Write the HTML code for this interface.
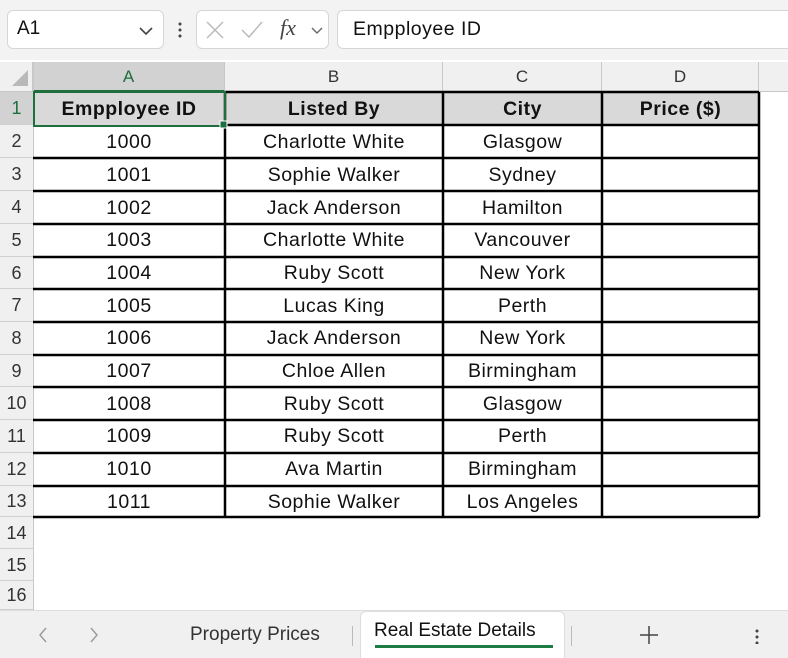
<!DOCTYPE html>
<html><head><meta charset="utf-8"><style>
*{margin:0;padding:0;box-sizing:border-box}
body{width:788px;height:658px;overflow:hidden;background:#fff;font-family:"Liberation Sans",sans-serif;position:relative;color:#111}
.abs{position:absolute}
.box{position:absolute;background:#fff;border:1px solid #d6d6d6;border-radius:6px}
.cell{position:absolute;text-align:center;font-size:19.5px;line-height:32px;letter-spacing:0.5px;white-space:nowrap}
.rh{position:absolute;left:0;width:33px;text-align:center;font-size:18px;color:#333;border-bottom:1px solid #d0d0d0;background:#f0f0f0}
.ch{position:absolute;top:62px;height:30px;text-align:center;font-size:17px;line-height:30px;color:#333;border-right:1px solid #c8c8c8;background:#f0f0f0}
</style></head><body>
<div class="abs" style="left:0;top:0;width:788px;height:60px;background:#f3f3f3"></div>
<div class="box" style="left:7px;top:10px;width:157px;height:39px"></div>
<div class="abs" style="left:17px;top:18px;font-size:19px">A1</div>
<svg class="abs" style="left:138px;top:26px" width="16" height="10"><path d="M2 2l6 6 6-6" stroke="#444" stroke-width="1.6" fill="none"/></svg>
<div class="abs" style="left:178px;top:21px;width:4px;height:18px;background:radial-gradient(circle,#444 1.4px,transparent 1.6px) 0 0/4px 6px"></div>
<div class="box" style="left:196px;top:10px;width:133px;height:39px"></div>
<svg class="abs" style="left:205px;top:20px" width="20" height="20"><path d="M2 2l16 16M18 2L2 18" stroke="#bbb" stroke-width="1.5"/></svg>
<svg class="abs" style="left:240px;top:20px" width="24" height="20"><path d="M2 10l7 7 13-15" stroke="#bbb" stroke-width="1.5" fill="none"/></svg>
<div class="abs" style="left:280px;top:15px;font-family:'Liberation Serif',serif;font-style:italic;font-size:22px;color:#444">fx</div>
<svg class="abs" style="left:310px;top:26px" width="14" height="10"><path d="M2 2l5 5 5-5" stroke="#666" stroke-width="1.4" fill="none"/></svg>
<div class="box" style="left:337px;top:10px;width:460px;height:39px;border-radius:6px 0 0 6px"></div>
<div class="abs" style="left:353px;top:18px;font-size:19.5px;letter-spacing:0.5px">Empployee ID</div>

<div class="abs" style="left:0;top:62px;width:33px;height:30px;background:#f0f0f0;border-right:1px solid #c8c8c8"></div>
<svg class="abs" style="left:8px;top:68px" width="22" height="20"><path d="M20 2V18H4z" fill="#b9b9b9"/></svg>
<div class="ch" style="left:33px;width:192px;background:#d2d2d2;color:#1e6e3e;border-bottom:2px solid #1e6e3e">A</div>
<div class="ch" style="left:225px;width:218px">B</div>
<div class="ch" style="left:443px;width:159px">C</div>
<div class="ch" style="left:602px;width:157px">D</div>
<div class="ch" style="left:759px;width:29px;border-right:none"></div>
<div class="abs" style="left:0;top:91px;width:788px;height:1px;background:#c8c8c8"></div>
<div class="abs" style="left:33px;top:62px;width:1px;height:548px;background:#c8c8c8"></div>

<div class="rh" style="top:92px;height:33px;line-height:33px;background:#d2d2d2;color:#1e6e3e">1</div>
<div class="rh" style="top:125px;height:33px;line-height:33px">2</div>
<div class="rh" style="top:158px;height:33px;line-height:33px">3</div>
<div class="rh" style="top:191px;height:33px;line-height:33px">4</div>
<div class="rh" style="top:224px;height:33px;line-height:33px">5</div>
<div class="rh" style="top:257px;height:32px;line-height:32px">6</div>
<div class="rh" style="top:289px;height:33px;line-height:33px">7</div>
<div class="rh" style="top:322px;height:33px;line-height:33px">8</div>
<div class="rh" style="top:355px;height:32px;line-height:32px">9</div>
<div class="rh" style="top:387px;height:33px;line-height:33px">10</div>
<div class="rh" style="top:420px;height:33px;line-height:33px">11</div>
<div class="rh" style="top:453px;height:33px;line-height:33px">12</div>
<div class="rh" style="top:486px;height:31px;line-height:31px">13</div>
<div class="rh" style="top:517px;height:32px;line-height:32px">14</div>
<div class="rh" style="top:549px;height:32px;line-height:32px">15</div>
<div class="rh" style="top:581px;height:29px;line-height:29px">16</div>

<div class="abs" style="left:34px;top:92px;width:725px;height:33px;background:#d9d9d9"></div>
<svg class="abs" style="left:0;top:0" width="788" height="610">
<g stroke="#000" stroke-width="2.5">
<path d="M759 92V517M33 517H759M225 125V517M443 92V517M602 92V517M225 92V125"/>
<path d="M225 125H759M33 158H759M33 191H759M33 224H759M33 257H759M33 289H759M33 322H759M33 355H759M33 387H759M33 420H759M33 453H759M33 486H759"/>
<path d="M225 92H759" />
</g>
<rect x="34" y="92" width="191" height="34" fill="none" stroke="#1e6e3e" stroke-width="2"/>
<rect x="220" y="121" width="7" height="7" fill="#1e6e3e" stroke="#fff" stroke-width="1"/>
</svg>

<div class="cell" style="left:33px;top:93px;width:192px;font-weight:bold">Empployee ID</div>
<div class="cell" style="left:225px;top:93px;width:218px;font-weight:bold">Listed By</div>
<div class="cell" style="left:443px;top:93px;width:159px;font-weight:bold">City</div>
<div class="cell" style="left:602px;top:93px;width:157px;font-weight:bold">Price ($)</div>

<div class="cell" style="left:33px;top:126px;width:192px">1000</div><div class="cell" style="left:225px;top:126px;width:218px">Charlotte White</div><div class="cell" style="left:443px;top:126px;width:159px">Glasgow</div>
<div class="cell" style="left:33px;top:159px;width:192px">1001</div><div class="cell" style="left:225px;top:159px;width:218px">Sophie Walker</div><div class="cell" style="left:443px;top:159px;width:159px">Sydney</div>
<div class="cell" style="left:33px;top:192px;width:192px">1002</div><div class="cell" style="left:225px;top:192px;width:218px">Jack Anderson</div><div class="cell" style="left:443px;top:192px;width:159px">Hamilton</div>
<div class="cell" style="left:33px;top:224px;width:192px">1003</div><div class="cell" style="left:225px;top:224px;width:218px">Charlotte White</div><div class="cell" style="left:443px;top:224px;width:159px">Vancouver</div>
<div class="cell" style="left:33px;top:257px;width:192px">1004</div><div class="cell" style="left:225px;top:257px;width:218px">Ruby Scott</div><div class="cell" style="left:443px;top:257px;width:159px">New York</div>
<div class="cell" style="left:33px;top:290px;width:192px">1005</div><div class="cell" style="left:225px;top:290px;width:218px">Lucas King</div><div class="cell" style="left:443px;top:290px;width:159px">Perth</div>
<div class="cell" style="left:33px;top:322px;width:192px">1006</div><div class="cell" style="left:225px;top:322px;width:218px">Jack Anderson</div><div class="cell" style="left:443px;top:322px;width:159px">New York</div>
<div class="cell" style="left:33px;top:355px;width:192px">1007</div><div class="cell" style="left:225px;top:355px;width:218px">Chloe Allen</div><div class="cell" style="left:443px;top:355px;width:159px">Birmingham</div>
<div class="cell" style="left:33px;top:388px;width:192px">1008</div><div class="cell" style="left:225px;top:388px;width:218px">Ruby Scott</div><div class="cell" style="left:443px;top:388px;width:159px">Glasgow</div>
<div class="cell" style="left:33px;top:420px;width:192px">1009</div><div class="cell" style="left:225px;top:420px;width:218px">Ruby Scott</div><div class="cell" style="left:443px;top:420px;width:159px">Perth</div>
<div class="cell" style="left:33px;top:453px;width:192px">1010</div><div class="cell" style="left:225px;top:453px;width:218px">Ava Martin</div><div class="cell" style="left:443px;top:453px;width:159px">Birmingham</div>
<div class="cell" style="left:33px;top:486px;width:192px">1011</div><div class="cell" style="left:225px;top:486px;width:218px">Sophie Walker</div><div class="cell" style="left:443px;top:486px;width:159px">Los Angeles</div>

<div class="abs" style="left:0;top:610px;width:788px;height:48px;background:#f0f0f0;border-top:1px solid #ddd"></div>
<svg class="abs" style="left:36px;top:626px" width="70" height="18"><path d="M10 2L4 9l6 7M55 2l6 7-6 7" stroke="#999" stroke-width="1.4" fill="none"/></svg>
<div class="abs" style="left:190px;top:624px;font-size:19px;color:#333">Property Prices</div>
<div class="abs" style="left:352px;top:626px;width:1px;height:20px;background:#bbb"></div>
<div class="abs" style="left:360px;top:611px;width:205px;height:47px;background:#fff;border-radius:6px 6px 0 0;border:1px solid #ddd;border-bottom:none"></div>
<div class="abs" style="left:374px;top:620px;font-size:19px;color:#111">Real Estate Details</div>
<div class="abs" style="left:375px;top:645px;width:178px;height:3px;background:#1e7b45"></div>
<div class="abs" style="left:571px;top:626px;width:1px;height:20px;background:#bbb"></div>
<svg class="abs" style="left:638px;top:624px" width="22" height="22"><path d="M11 2v18M2 11h18" stroke="#444" stroke-width="1.5"/></svg>
<div class="abs" style="left:755px;top:628px;width:4px;height:16px;background:radial-gradient(circle,#444 1.4px,transparent 1.6px) 0 0/4px 6px"></div>
</body></html>
